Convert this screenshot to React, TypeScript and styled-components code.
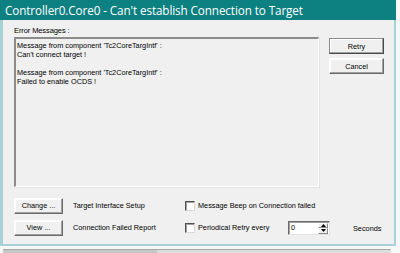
import React from "react"
import styled, { createGlobalStyle } from "styled-components"

const Global = createGlobalStyle`
  html, body {
    margin: 0;
    padding: 0;
    background: #ffffff;
    width: 400px;
    height: 253px;
    overflow: hidden;
  }
  * {
    box-sizing: border-box;
  }
`

const Screen = styled.div`
  width: 400px;
  height: 253px;
  display: flex;
  flex-direction: column;
  background: #f7f7f7;
`

const Window = styled.div`
  width: 396px;
  height: 246px;
  display: flex;
  flex-direction: column;
  background: #f0f0f0;
  border-left: 3px solid #a6d2d5;
  border-right: 2px solid #a6d2d5;
  border-bottom: 2px solid #a6d2d5;
`

const TitleBar = styled.div`
  height: 20px;
  margin-left: -3px;
  margin-right: -2px;
  background: #0d8081;
  color: #ffffff;
  font-family: "Open Sans", "Noto Sans", sans-serif;
  font-size: 11.7px;
  line-height: 20px;
  padding-left: 5px;
  white-space: nowrap;
  letter-spacing: -0.1px;
`

const Client = styled.div`
  flex: 1;
  display: flex;
  flex-direction: column;
  padding: 6px 0 0 11px;
  font-family: "Liberation Sans", Arial, sans-serif;
  font-size: 7.3px;
  color: #000000;
`

const TopSection = styled.div`
  display: flex;
  gap: 10px;
`

const MessagesColumn = styled.div`
  display: flex;
  flex-direction: column;
  width: 305px;
`

const GroupLabel = styled.div`
  height: 11px;
  line-height: 9px;
  font-size: 7.5px;
  letter-spacing: -0.1px;
`

const MessageBox = styled.div`
  height: 150px;
  border-style: solid;
  border-width: 2px 1px 1px 2px;
  border-color: #8c8c8c #ffffff #ffffff #8c8c8c;
  box-shadow: 1px 1px 0 #e3e3e3;
  padding: 2px 0 0 1px;
  line-height: 9px;
  white-space: pre;
`

const ButtonColumn = styled.div`
  display: flex;
  flex-direction: column;
  gap: 4px;
  padding-top: 12px;
`

const PushButton = styled.button<{ $w: number; $default?: boolean }>`
  width: ${(p) => p.$w}px;
  height: 16px;
  padding: 0;
  margin: 0;
  font-family: "Liberation Sans", Arial, sans-serif;
  font-size: 7.3px;
  color: #000000;
  background: #f0f0f0;
  border-style: solid;
  border-width: 1px;
  border-color: ${(p) =>
    p.$default ? "#8a8a8a #4a4a4a #4a4a4a #8a8a8a" : "#ffffff #6a6a6a #6a6a6a #ffffff"};
  box-shadow: inset -1px -1px 0 #a0a0a0, inset 1px 1px 0 #ffffff;
  line-height: 13px;
`

const BottomSection = styled.div`
  display: flex;
  flex-direction: column;
  gap: 7px;
  padding-top: 11px;
`

const OptionRow = styled.div`
  display: flex;
  align-items: center;
  height: 15px;
`

const ActionLabel = styled.span`
  width: 112px;
  margin-left: 10px;
  white-space: nowrap;
`

const CheckBox = styled.span`
  width: 10px;
  height: 10px;
  background: #ffffff;
  border-style: solid;
  border-width: 1px;
  border-color: #505050 #d8d8d8 #d8d8d8 #505050;
  box-shadow: inset 1px 1px 0 #a0a0a0;
  margin-right: 3px;
`

const CheckText = styled.span<{ $w?: number }>`
  white-space: nowrap;
  width: ${(p) => (p.$w ? `${p.$w}px` : "auto")};
`

const Spinner = styled.div`
  width: 42px;
  height: 14px;
  display: flex;
  background: #ffffff;
  border-style: solid;
  border-width: 1px;
  border-color: #6a6a6a #e3e3e3 #e3e3e3 #6a6a6a;
  box-shadow: inset 1px 1px 0 #a0a0a0;
`

const SpinValue = styled.span`
  flex: 1;
  padding: 1px 0 0 2px;
  line-height: 9px;
`

const SpinButtons = styled.div`
  width: 10px;
  display: flex;
  flex-direction: column;
  margin: 1px 1px 0 0;
`

const SpinArrow = styled.div`
  flex: 1;
  display: flex;
  align-items: center;
  justify-content: center;
  background: #f0f0f0;
  border-style: solid;
  border-width: 1px;
  border-color: #ffffff #8a8a8a #8a8a8a #ffffff;
`

const SecondsLabel = styled.span`
  margin-left: 23px;
  padding-top: 2px;
`

const BackdropStrip = styled.div`
  flex: 1;
  display: flex;
  align-items: flex-end;
  padding-left: 3px;
`

const BackBar = styled.div`
  width: 388px;
  height: 4px;
  background: linear-gradient(to right, #c6c6c6 0, #c6c6c6 154px, #dcdcdc 154px);
  border-top: 1px solid #a8a8a8;
`

const messages = `Message from component 'Tc2CoreTargIntf' :
Can't connect target !

Message from component 'Tc2CoreTargIntf' :
Failed to enable OCDS !`

const Arrow = ({ up }: { up?: boolean }) => (
  <svg width="5" height="3" viewBox="0 0 5 3">
    <path d={up ? "M2.5 0 L5 3 L0 3 Z" : "M0 0 L5 0 L2.5 3 Z"} fill="#000" />
  </svg>
)

export default function App() {
  return (
    <>
      <Global />
      <Screen>
        <Window>
          <TitleBar>Controller0.Core0 - Can't establish Connection to Target</TitleBar>
          <Client>
            <TopSection>
              <MessagesColumn>
                <GroupLabel>Error Messages :</GroupLabel>
                <MessageBox>{messages}</MessageBox>
              </MessagesColumn>
              <ButtonColumn>
                <PushButton $w={55} $default>
                  Retry
                </PushButton>
                <PushButton $w={55}>Cancel</PushButton>
              </ButtonColumn>
            </TopSection>
            <BottomSection>
              <OptionRow>
                <PushButton $w={49}>Change ...</PushButton>
                <ActionLabel>Target Interface Setup</ActionLabel>
                <CheckBox />
                <CheckText>Message Beep on Connection failed</CheckText>
              </OptionRow>
              <OptionRow>
                <PushButton $w={49}>View ...</PushButton>
                <ActionLabel>Connection Failed Report</ActionLabel>
                <CheckBox />
                <CheckText $w={90}>Periodical Retry every</CheckText>
                <Spinner>
                  <SpinValue>0</SpinValue>
                  <SpinButtons>
                    <SpinArrow>
                      <Arrow up />
                    </SpinArrow>
                    <SpinArrow>
                      <Arrow />
                    </SpinArrow>
                  </SpinButtons>
                </Spinner>
                <SecondsLabel>Seconds</SecondsLabel>
              </OptionRow>
            </BottomSection>
          </Client>
        </Window>
        <BackdropStrip>
          <BackBar />
        </BackdropStrip>
      </Screen>
    </>
  )
}
